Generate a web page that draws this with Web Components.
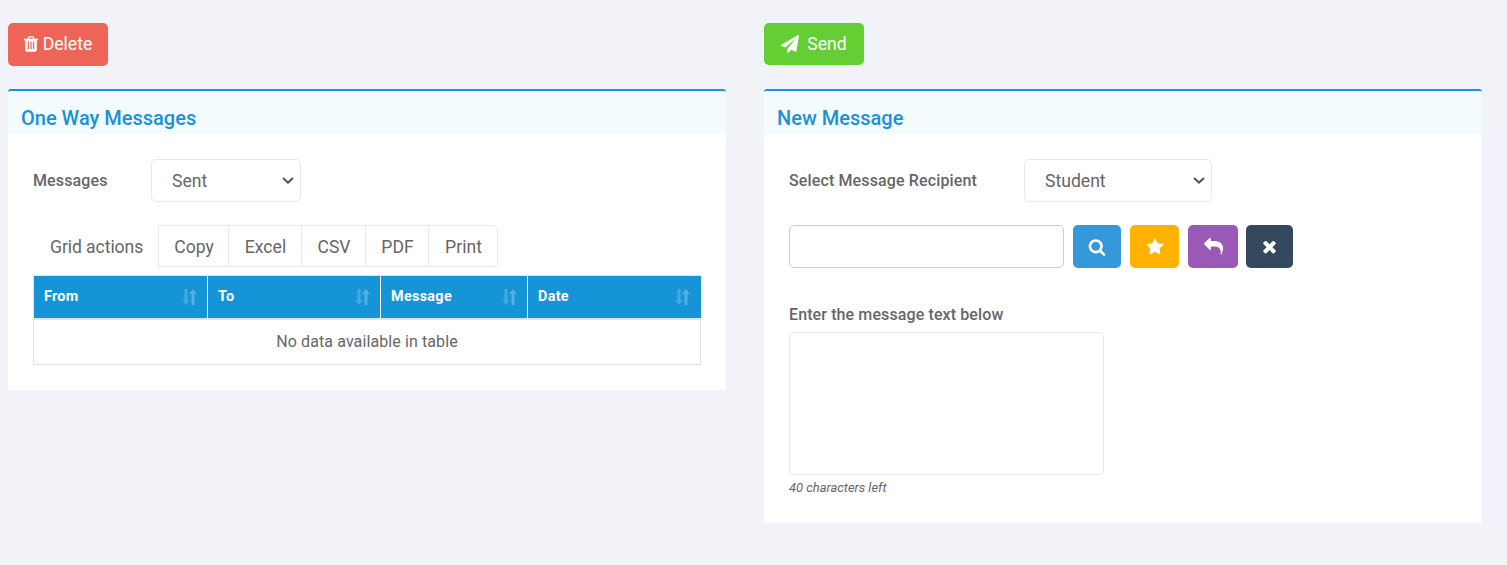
<!DOCTYPE html>
<html>
<head>
<meta charset="utf-8">
<title>Messages</title>
<style>
  html, body { margin: 0; height: 100%; overflow: hidden; }
  body {
    background: #f1f3f8;
    font-family: Roboto, "Liberation Sans", sans-serif;
    color: #666;
  }
</style>
</head>
<body>
<messages-page></messages-page>

<script>
const ICONS = {
  trash: "M704 1376v-704q0-14-9-23t-23-9h-64q-14 0-23 9t-9 23v704q0 14 9 23t23 9h64q14 0 23-9t9-23zm256 0v-704q0-14-9-23t-23-9h-64q-14 0-23 9t-9 23v704q0 14 9 23t23 9h64q14 0 23-9t9-23zm256 0v-704q0-14-9-23t-23-9h-64q-14 0-23 9t-9 23v704q0 14 9 23t23 9h64q14 0 23-9t9-23zm-544-992h448l-48-117q-7-9-17-11h-317q-10 2-17 11zm928 32v64q0 14-9 23t-23 9h-96v948q0 83-47 143.500t-113 60.500h-832q-66 0-113-58.500t-47-141.500v-952h-96q-14 0-23-9t-9-23v-64q0-14 9-23t23-9h309l70-167q15-37 54-63t79-26h320q40 0 79 26t54 63l70 167h309q14 0 23 9t9 23z",
  plane: "M1764 11q33 24 27 64l-256 1536q-5 29-32 45-14 8-31 8-11 0-24-5l-453-185-242 295q-18 23-49 23-13 0-22-4-19-7-30.500-23.500t-11.500-36.500v-349l864-1059-1069 925-395-162q-37-14-40-55-2-40 32-59l1664-960q15-9 32-9 20 0 36 11z",
  search: "M1216 832q0-185-131.500-316.500t-316.500-131.500-316.500 131.500-131.500 316.500 131.500 316.500 316.500 131.500 316.500-131.500 131.500-316.500zm512 832q0 52-38 90t-90 38q-54 0-90-38l-343-342q-179 124-399 124-143 0-273.500-55.500t-225-150-150-225-55.500-273.500 55.500-273.500 150-225 225-150 273.500-55.500 273.500 55.500 225 150 150 225 55.500 273.500q0 220-124 399l343 343q37 37 37 90z",
  star: "M1728 647q0 22-26 48l-363 354 86 500q1 7 1 20 0 21-10.500 35.500t-30.500 14.500q-19 0-40-12l-449-236-449 236q-22 12-40 12-21 0-31.500-14.500t-10.500-35.500q0-6 2-20l86-500-364-354q-25-27-25-48 0-37 56-46l502-73 225-455q19-41 49-41t49 41l225 455 502 73q56 9 56 46z",
  reply: "M1792 1120q0 166-127 451-3 7-10.500 24t-13.500 30-13 22q-12 17-28 17-15 0-23.500-10t-8.500-25q0-9 2.500-26.500t2.500-23.500q5-68 5-123 0-101-17.500-181t-48.500-138.500-80-101-105.500-69.500-133-42.500-154-21.500-175.500-6h-224v256q0 26-19 45t-45 19-45-19l-512-512q-19-19-19-45t19-45l512-512q19-19 45-19t45 19 19 45v256h224q713 0 875 403 53 134 53 333z",
  times: "M1490 1322q0 40-28 68l-136 136q-28 28-68 28t-68-28l-294-294-294 294q-28 28-68 28t-68-28l-136-136q-28-28-28-68t28-68l294-294-294-294q-28-28-28-68t28-68l136-136q28-28 68-28t68 28l294 294 294-294q28-28 68-28t68 28l136 136q28 28 28 68t-28 68l-294 294 294 294q28 28 28 68z"
};

function iconSvg(name, size) {
  return `<svg width="${size}" height="${size}" viewBox="0 0 1792 1792" fill="#fff"><path d="${ICONS[name]}"/></svg>`;
}

class ActionButton extends HTMLElement {
  connectedCallback() {
    const icon = this.getAttribute("icon");
    const size = this.getAttribute("size") || 16;
    this.attachShadow({ mode: "open" }).innerHTML = `
      <style>
        :host { display: inline-flex; }
        button {
          display: flex; align-items: center; justify-content: center;
          width: var(--w, 100px); height: var(--h, 43px);
          gap: var(--gap, 3px);
          padding: 0 var(--pr, 0) var(--pb, 0) 0; border: 0; border-radius: 5px;
          background: var(--bg, #3498db); color: #fff;
          font: 400 17.6px Roboto, sans-serif;
        }
        svg { display: block; }
      </style>
      <button>${iconSvg(icon, size)}<slot></slot></button>`;
  }
}
customElements.define("action-button", ActionButton);

class PanelCard extends HTMLElement {
  connectedCallback() {
    this.attachShadow({ mode: "open" }).innerHTML = `
      <style>
        :host {
          display: block;
          border-top: 2px solid #1a94d8;
          border-radius: 3px 3px 0 0;
          background: #f3fbff;
        }
        h2 {
          margin: 0; padding: 15px 13px 3px;
          height: 25px;
          font: 500 20px/25px Roboto, sans-serif;
          color: #1c91d6;
        }
        .body {
          background: #fff;
          border-radius: 3px;
          padding: 25px;
        }
      </style>
      <h2>${this.getAttribute("heading")}</h2>
      <div class="body"><slot></slot></div>`;
  }
}
customElements.define("panel-card", PanelCard);

const CHEVRON = "url(\"data:image/svg+xml,%3Csvg xmlns='http://www.w3.org/2000/svg' width='12' height='7' viewBox='0 0 12 7'%3E%3Cpath d='M1 1l5 4.600 5-4.600' fill='none' stroke='%23555' stroke-width='2'/%3E%3C/svg%3E\")";

class FormSelect extends HTMLElement {
  connectedCallback() {
    this.attachShadow({ mode: "open" }).innerHTML = `
      <style>
        :host { display: block; }
        select {
          appearance: none;
          display: block;
          width: var(--w, 150px); height: 43px;
          padding: 0 20px;
          background: #fff ${CHEVRON} no-repeat right 6px center;
          border: 1px solid #e9e9ec; border-radius: 5px;
          color: #666;
          font: 400 17.6px Roboto, sans-serif;
          outline: 0;
        }
      </style>
      <select><option>${this.getAttribute("value")}</option></select>`;
  }
}
customElements.define("form-select", FormSelect);

class GridToolbar extends HTMLElement {
  connectedCallback() {
    const items = [["Copy", 69], ["Excel", 73], ["CSV", 64], ["PDF", 63], ["Print", 69]]
      .map(([t, w]) => `<span style="width:${w}px">${t}</span>`).join("");
    this.attachShadow({ mode: "open" }).innerHTML = `
      <style>
        :host {
          display: flex; align-items: center;
          height: 42px;
          font: 400 17.6px/42px Roboto, sans-serif;
          color: #666;
        }
        b { font-weight: 400; width: 125px; padding: 1px 0 0 17px; box-sizing: border-box; letter-spacing: -.08px; }
        .group {
          display: flex; height: 42px; box-sizing: border-box;
          border: 1px solid #e9e9ec; border-radius: 0 5px 5px 0;
        }
        span { box-sizing: border-box; padding-left: 1px; text-align: center; line-height: 42px; border-left: 1px solid #e9e9ec; }
        span:first-child { border-left: 0; }
      </style>
      <b>Grid actions</b>
      <div class="group">${items}</div>`;
  }
}
customElements.define("grid-toolbar", GridToolbar);

class DataGrid extends HTMLElement {
  connectedCallback() {
    const sort = `<svg width="15" height="16" viewBox="0 0 15 16" fill="#fff">
      <path opacity=".2" d="M2.500 0h3v11H8l-4 5-4-5h2.500z"/>
      <path opacity=".28" d="M9.500 16h3V5H15l-4-5-4 5h2.500z"/></svg>`;
    const cols = [["From", 174], ["To", 173], ["Message", 147], ["Date", 173]];
    const heads = cols.map(([t, w]) =>
      `<th style="width:${w}px"><div><span>${t}</span>${sort}</div></th>`).join("");
    this.attachShadow({ mode: "open" }).innerHTML = `
      <style>
        :host { display: block; margin-top: 8px; }
        table {
          width: 668px; table-layout: fixed;
          border-collapse: collapse;
          font-family: Roboto, sans-serif;
        }
        th {
          height: 43px; box-sizing: border-box;
          padding: 0 10.500px 0 10px;
          background: #1594d7; color: #fff;
          font-size: 14.4px; font-weight: 700; text-align: left; letter-spacing: .3px;
          border-left: 1px solid #fff;
          border-top: 1px solid #e3e3e3;
          border-bottom: 2px solid #e3e3e3;
        }
        th:first-child { border-left: 1px solid #e3e3e3; }
        th div { display: flex; align-items: center; justify-content: space-between; }
        td {
          height: 46px; padding: 0; box-sizing: border-box;
          border: 1px solid #e3e3e3; border-top: 0;
          text-align: center; color: #666; font-size: 16px; letter-spacing: .1px;
        }
      </style>
      <table>
        <thead><tr>${heads}</tr></thead>
        <tbody><tr><td colspan="4">No data available in table</td></tr></tbody>
      </table>`;
  }
}
customElements.define("data-grid", DataGrid);

class LookupBar extends HTMLElement {
  connectedCallback() {
    const btns = [
      ["search", "#3498db", 48, 18, ""],
      ["star", "#ffb300", 49, 18, ""],
      ["reply", "#9b59b6", 50, 19, ""],
      ["times", "#34495e", 47, 19, "margin-left:-1px;"]
    ].map(([icon, bg, w, size, extra]) =>
      `<action-button icon="${icon}" size="${size}" style="${extra}--bg:${bg};--w:${w}px"></action-button>`).join("");
    this.attachShadow({ mode: "open" }).innerHTML = `
      <style>
        :host { display: flex; gap: 9px; }
        input {
          width: 275px; height: 43px; box-sizing: border-box; margin: 0;
          border: 1px solid #ccc; border-radius: 5px;
          background: #fff; outline: 0;
        }
      </style>
      <input type="text" aria-label="Search recipient">${btns}`;
  }
}
customElements.define("lookup-bar", LookupBar);

class MessageBox extends HTMLElement {
  connectedCallback() {
    this.attachShadow({ mode: "open" }).innerHTML = `
      <style>
        :host { display: block; margin: 37px 0 3px; font-family: Roboto, sans-serif; color: #666; }
        label { display: block; font-size: 16px; font-weight: 500; line-height: 20px; letter-spacing: .11px; }
        textarea {
          display: block; margin-top: 7px;
          width: 315px; height: 143px; box-sizing: border-box;
          border: 1px solid #e9e9ec; border-radius: 5px;
          background: #fff; outline: 0; resize: none;
        }
        em { display: block; margin-top: 5px; font-size: 12.9px; line-height: 15px; }
      </style>
      <label>Enter the message text below</label>
      <textarea></textarea>
      <em>40 characters left</em>`;
  }
}
customElements.define("message-box", MessageBox);

class MessagesPage extends HTMLElement {
  connectedCallback() {
    this.attachShadow({ mode: "open" }).innerHTML = `
      <style>
        :host {
          display: grid;
          grid-template-columns: 718px 718px;
          column-gap: 38px;
          padding: 23px 0 0 8px;
        }
        .top { height: 66px; }
        .row { display: flex; align-items: center; }
        .row-label { font-size: 16px; font-weight: 500; color: #666; letter-spacing: .13px; }
        grid-toolbar { margin-top: 23px; }
        lookup-bar { margin-top: 23px; }
      </style>
      <section>
        <div class="top"><action-button icon="trash" size="18" style="--bg:#ee6558;--gap:3px;--pr:2px;--pb:1px">Delete</action-button></div>
        <panel-card heading="One Way Messages">
          <div class="row">
            <span class="row-label" style="width:118px">Messages</span>
            <form-select value="Sent"></form-select>
          </div>
          <grid-toolbar></grid-toolbar>
          <data-grid></data-grid>
        </panel-card>
      </section>
      <section>
        <div class="top"><action-button icon="plane" size="18" style="--bg:#63cf33;--h:42px;--gap:8px">Send</action-button></div>
        <panel-card heading="New Message">
          <div class="row">
            <span class="row-label" style="width:235px">Select Message Recipient</span>
            <form-select value="Student" style="--w:188px"></form-select>
          </div>
          <lookup-bar></lookup-bar>
          <message-box></message-box>
        </panel-card>
      </section>`;
  }
}
customElements.define("messages-page", MessagesPage);
</script>
</body>
</html>
